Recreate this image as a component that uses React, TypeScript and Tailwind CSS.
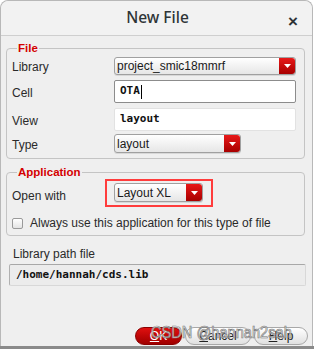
import React from 'react';

// Small red drop-down button used by the combo boxes
function DropButton() {
  return (
    <div className="flex h-full w-[16px] items-center justify-center rounded-r-[3px] bg-gradient-to-b from-[#e81818] to-[#a80000]">
      <svg width="7" height="4" viewBox="0 0 7 4">
        <polygon points="0,0 7,0 3.5,4" fill="#fff" />
      </svg>
    </div>
  );
}

function Combo({ text, width, height = 18 }: { text: string; width: number; height?: number }) {
  return (
    <div
      className="flex items-stretch rounded-[3px] border border-[#a0a0a0] bg-gradient-to-b from-[#ffffff] to-[#e6e6e6] shadow-[0_1px_0_#d8d8d8]"
      style={{ width, height }}
    >
      <div className="flex flex-1 items-center pl-[2px] text-[12px] leading-none text-[#1a1a1a]">{text}</div>
      <DropButton />
    </div>
  );
}

function Row({ label, children, className = '' }: { label: string; children: React.ReactNode; className?: string }) {
  return (
    <div className={`flex items-center ${className}`}>
      <div className="w-[102px] shrink-0 pt-[2px] text-[12px] text-[#2a2a2a]">{label}</div>
      {children}
    </div>
  );
}

export default function App() {
  return (
    <div className="flex h-[349px] w-[314px] flex-col overflow-hidden bg-white font-['Liberation_Sans',sans-serif]">
      <div className="relative flex h-[346px] w-[313px] shrink-0 flex-col rounded-t-[8px] border border-b-0 border-[#b8b8b8] bg-[#efefef]">
        {/* title bar */}
        <div className="flex h-[35px] shrink-0 items-center justify-center rounded-t-[8px] border-b border-[#cfcfcf] bg-[#f2f2f2]">
          <span className="ml-[2px] font-['Noto_Sans',sans-serif] text-[15.5px] font-medium text-[#2e3436]">New File</span>
          <span className="absolute right-[14px] top-[8px] text-[17px] font-bold text-[#2e3436]">×</span>
        </div>

        {/* File group */}
        <fieldset className="ml-[5px] mt-[5px] w-[299px] rounded-[4px] border border-[#c4c4c4] pb-[5px] pl-[5px] pr-[8px]">
          <legend className="ml-[5px] px-[1px] text-[11.5px] leading-[14px] font-bold text-[#d40000]">File</legend>
          <Row label="Library" className="mt-[2px] h-[18px]">
            <Combo text="project_smic18mmrf" width={182} />
          </Row>
          <Row label="Cell" className="mt-[5px] h-[23px]">
            <div className="flex h-[23px] w-[182px] items-center rounded-[2px] border border-[#8c8c8c] bg-white pl-[5px] font-['DejaVu_Sans_Mono',monospace] text-[11px] font-bold text-[#111]">
              OTA<span className="ml-[1px] h-[14px] w-[1px] bg-black" />
            </div>
          </Row>
          <Row label="View" className="mt-[5px] h-[23px]">
            <div className="flex h-[23px] w-[182px] items-center rounded-[2px] border border-[#e2e2e2] bg-white pl-[5px] font-['DejaVu_Sans_Mono',monospace] text-[11px] font-bold text-[#111]">
              layout
            </div>
          </Row>
          <Row label="Type" className="mt-[3px] h-[19px]">
            <Combo text="layout" width={127} height={19} />
          </Row>
        </fieldset>

        {/* Application group */}
        <fieldset className="ml-[5px] mt-[6px] w-[299px] rounded-[4px] border border-[#c4c4c4] pb-[3px] pl-[5px] pr-[8px]">
          <legend className="ml-[5px] px-[1px] text-[11.5px] leading-[14px] font-bold text-[#d40000]">Application</legend>
          <div className="flex items-center">
            <div className="w-[93px] shrink-0 pt-[6px] text-[12px] text-[#2a2a2a]">Open with</div>
            <div className="border-2 border-[#ff3c3c] pb-[3px] pl-[7px] pr-[8px] pt-[2px]">
              <Combo text="Layout XL" width={89} height={19} />
            </div>
          </div>
          <div className="mt-[7px] flex items-center">
            <div className="h-[11px] w-[11px] rounded-[2px] border border-[#9a9a9a] bg-gradient-to-b from-white to-[#e4e4e4]" />
            <span className="ml-[7px] text-[12px] text-[#2a2a2a]">Always use this application for this type of file</span>
          </div>
        </fieldset>

        {/* Library path */}
        <div className="ml-[12px] mt-[11px] text-[12px] leading-[14px] text-[#2a2a2a]">Library path file</div>
        <div className="ml-[8px] mt-[3px] flex h-[22px] w-[297px] items-center rounded-[2px] border border-[#d8d8d8] border-l-[#b0b0b0] border-t-[#a8a8a8] bg-[#ececec] pl-[6px] font-['DejaVu_Sans_Mono',monospace] text-[11px] font-bold text-[#111]">
          /home/hannah/cds.lib
        </div>

        {/* buttons */}
        <div className="mt-auto mb-[1px] mr-[4px] flex justify-end gap-[3px]">
          <div className="flex h-[18px] w-[47px] items-center justify-center rounded-full border border-[#8a0000] bg-gradient-to-b from-[#e01010] to-[#a00000] text-[12px] text-white">
            <span className="underline">O</span>K
          </div>
          <div className="flex h-[18px] w-[66px] items-center justify-center rounded-full border border-[#a8a8a8] bg-gradient-to-b from-white to-[#e0e0e0] text-[12px] text-[#222]">
            <span className="underline">C</span>ancel
          </div>
          <div className="flex h-[18px] w-[54px] items-center justify-center rounded-full border border-[#a8a8a8] bg-gradient-to-b from-white to-[#e0e0e0] text-[12px] text-[#222]">
            <span className="underline">H</span>elp
          </div>
        </div>

        {/* watermark */}
        <div className="pointer-events-none absolute left-[150px] top-[323px] origin-left scale-x-[0.86] whitespace-nowrap text-[17px] leading-[18px] text-[#eeeeee]/80 [-webkit-text-stroke:0.7px_#7a7a7a]">
          CSDN @hannah2sah
        </div>
      </div>
      <div className="h-[3px] w-full shrink-0 bg-[#8a8a8a]" />
    </div>
  );
}
